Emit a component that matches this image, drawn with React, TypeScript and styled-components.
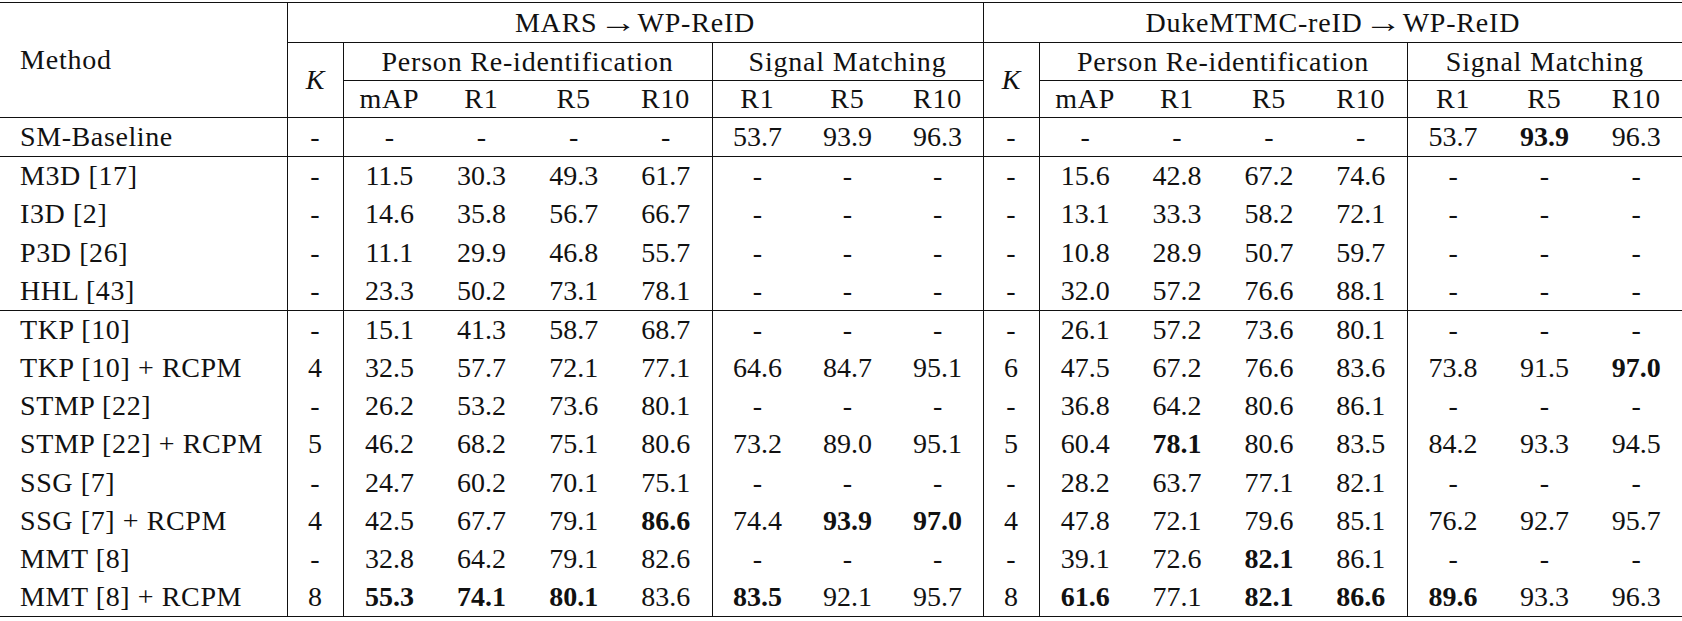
import React from 'react';
import styled, { createGlobalStyle } from 'styled-components';

const GlobalStyle = createGlobalStyle`
  html, body {
    margin: 0;
    padding: 0;
    background: #fff;
  }
  body {
    font-family: "Liberation Serif", "Times New Roman", serif;
    color: #111;
  }
`;

const Page = styled.div`
  width: 1682px;
  padding-top: 2px;
`;

const Table = styled.table`
  width: 1682px;
  table-layout: fixed;
  border-collapse: collapse;
  font-family: "Liberation Serif", "Times New Roman", serif;
  font-size: 28px;
  line-height: 1;
  color: #111;
  border-top: 1.5px solid #111;
  border-bottom: 1.5px solid #111;
`;

const Col = styled.col<{ $w: number }>`
  width: ${p => p.$w}px;
`;

const Row = styled.tr<{ $h: number }>`
  height: ${p => p.$h}px;
`;

const line = '1px solid #111';

const Head = styled.th<{ $r?: boolean; $b?: boolean; $left?: boolean }>`
  font-weight: normal;
  padding: 0 0 0 ${p => (p.$left ? '20px' : '0')};
  text-align: ${p => (p.$left ? 'left' : 'center')};
  vertical-align: middle;
  white-space: nowrap;
  letter-spacing: 0.8px;
  border-right: ${p => (p.$r ? line : 'none')};
  border-bottom: ${p => (p.$b ? line : 'none')};
`;

const Cell = styled.td<{ $r?: boolean; $b?: boolean; $left?: boolean; $bold?: boolean }>`
  padding: 0 0 0 ${p => (p.$left ? '20px' : '0')};
  text-align: ${p => (p.$left ? 'left' : 'center')};
  vertical-align: middle;
  white-space: nowrap;
  letter-spacing: ${p => (p.$left ? '0.6px' : '0')};
  font-weight: ${p => (p.$bold ? 700 : 400)};
  border-right: ${p => (p.$r ? line : 'none')};
  border-bottom: ${p => (p.$b ? line : 'none')};
`;

const Var = styled.i`
  font-style: italic;
  letter-spacing: 0;
`;

const Arrow = styled.span`
  display: inline-block;
  margin: 0 6px;
  letter-spacing: 0;
  transform: scaleX(1.35);
`;

// a leading * marks a bold (best) value
const groups: string[][][] = [
  [
    ['SM-Baseline', '-', '-', '-', '-', '-', '53.7', '93.9', '96.3', '-', '-', '-', '-', '-', '53.7', '*93.9', '96.3'],
  ],
  [
    ['M3D [17]', '-', '11.5', '30.3', '49.3', '61.7', '-', '-', '-', '-', '15.6', '42.8', '67.2', '74.6', '-', '-', '-'],
    ['I3D [2]', '-', '14.6', '35.8', '56.7', '66.7', '-', '-', '-', '-', '13.1', '33.3', '58.2', '72.1', '-', '-', '-'],
    ['P3D [26]', '-', '11.1', '29.9', '46.8', '55.7', '-', '-', '-', '-', '10.8', '28.9', '50.7', '59.7', '-', '-', '-'],
    ['HHL [43]', '-', '23.3', '50.2', '73.1', '78.1', '-', '-', '-', '-', '32.0', '57.2', '76.6', '88.1', '-', '-', '-'],
  ],
  [
    ['TKP [10]', '-', '15.1', '41.3', '58.7', '68.7', '-', '-', '-', '-', '26.1', '57.2', '73.6', '80.1', '-', '-', '-'],
    ['TKP [10] + RCPM', '4', '32.5', '57.7', '72.1', '77.1', '64.6', '84.7', '95.1', '6', '47.5', '67.2', '76.6', '83.6', '73.8', '91.5', '*97.0'],
    ['STMP [22]', '-', '26.2', '53.2', '73.6', '80.1', '-', '-', '-', '-', '36.8', '64.2', '80.6', '86.1', '-', '-', '-'],
    ['STMP [22] + RCPM', '5', '46.2', '68.2', '75.1', '80.6', '73.2', '89.0', '95.1', '5', '60.4', '*78.1', '80.6', '83.5', '84.2', '93.3', '94.5'],
    ['SSG [7]', '-', '24.7', '60.2', '70.1', '75.1', '-', '-', '-', '-', '28.2', '63.7', '77.1', '82.1', '-', '-', '-'],
    ['SSG [7] + RCPM', '4', '42.5', '67.7', '79.1', '*86.6', '74.4', '*93.9', '*97.0', '4', '47.8', '72.1', '79.6', '85.1', '76.2', '92.7', '95.7'],
    ['MMT [8]', '-', '32.8', '64.2', '79.1', '82.6', '-', '-', '-', '-', '39.1', '72.6', '*82.1', '86.1', '-', '-', '-'],
    ['MMT [8] + RCPM', '8', '*55.3', '*74.1', '*80.1', '83.6', '*83.5', '92.1', '95.7', '8', '*61.6', '77.1', '*82.1', '*86.6', '*89.6', '93.3', '96.3'],
  ],
];

const groupRowHeights = [39, 38.5, 38.25];
const dividers = new Set([0, 1, 5, 8, 9, 13]);
const colWidths = [287, 56, 92.25, 92.25, 92.25, 92.25, 90.33, 90.33, 90.34, 56, 92, 92, 92, 92, 91.67, 91.67, 91.66];

function Source({ name, last }: { name: string; last?: boolean }) {
  return (
    <Head colSpan={8} $r={!last} $b>
      {name}<Arrow>→</Arrow>WP-ReID
    </Head>
  );
}

function Groups({ last }: { last?: boolean }) {
  return (
    <>
      <Head rowSpan={2} $r $b><Var>K</Var></Head>
      <Head colSpan={4} $r $b>Person Re-identification</Head>
      <Head colSpan={3} $r={!last} $b>Signal Matching</Head>
    </>
  );
}

function Metrics({ last }: { last?: boolean }) {
  return (
    <>
      <Head $b>mAP</Head>
      <Head $b>R1</Head>
      <Head $b>R5</Head>
      <Head $r $b>R10</Head>
      <Head $b>R1</Head>
      <Head $b>R5</Head>
      <Head $r={!last} $b>R10</Head>
    </>
  );
}

export default function App() {
  return (
    <Page>
      <GlobalStyle />
      <Table>
        <colgroup>
          {colWidths.map((w, i) => <Col key={i} $w={w} />)}
        </colgroup>
        <thead>
          <Row $h={40}>
            <Head rowSpan={3} $left $r $b>Method</Head>
            <Source name="MARS" />
            <Source name="DukeMTMC-reID" last />
          </Row>
          <Row $h={38}>
            <Groups />
            <Groups last />
          </Row>
          <Row $h={37}>
            <Metrics />
            <Metrics last />
          </Row>
        </thead>
        <tbody>
          {groups.map((rows, g) =>
            rows.map((row, r) => (
              <Row key={`${g}-${r}`} $h={groupRowHeights[g]}>
                {row.map((v, c) => (
                  <Cell
                    key={c}
                    $left={c === 0}
                    $r={dividers.has(c)}
                    $b={r === rows.length - 1 && g < groups.length - 1}
                    $bold={v.startsWith('*')}
                  >
                    {v.replace('*', '')}
                  </Cell>
                ))}
              </Row>
            ))
          )}
        </tbody>
      </Table>
    </Page>
  );
}
